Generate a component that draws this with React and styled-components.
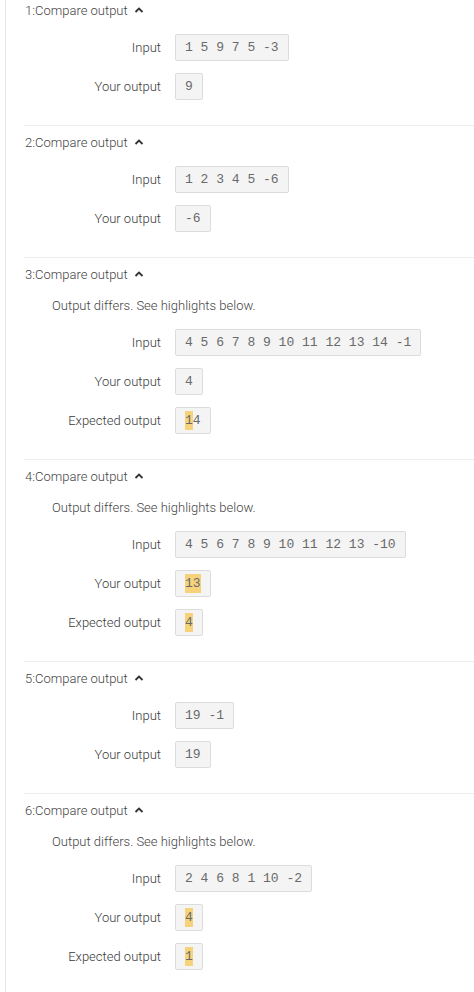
import React from "react";
import styled, { createGlobalStyle } from "styled-components";

const GlobalStyle = createGlobalStyle`
  body {
    margin: 0;
    background: #ffffff;
    font-family: Roboto, "Liberation Sans", Arial, sans-serif;
  }
`;

const Panel = styled.div`
  margin-left: 5px;
  border-left: 1px solid #e6e6e6;
  min-height: 992px;
  box-sizing: border-box;
`;

const Section = styled.section`
  margin-left: 18px;
  padding: 6px 0 25px 0;
  border-bottom: 1px solid #ececec;

  &:first-child {
    padding-top: 0;
  }
`;

const Header = styled.div`
  display: flex;
  align-items: center;
  height: 20px;
  font-size: 13px;
  font-weight: 300;
  color: #444;
  margin-left: 1px;
`;

const Chevron = styled.svg`
  width: 10px;
  height: 10px;
  margin-left: 6px;
`;

const Note = styled.div`
  margin: 12px 0 0 28px;
  height: 20px;
  line-height: 20px;
  font-size: 13px;
  font-weight: 300;
  color: #444;
`;

const Rows = styled.div`
  display: flex;
  flex-direction: column;
  gap: 12px;
  margin-top: ${(p) => (p.$afterNote ? 13 : 14)}px;
`;

const Row = styled.div`
  display: flex;
  align-items: center;
`;

const Label = styled.div`
  width: 137px;
  text-align: right;
  margin-right: 14px;
  font-size: 13px;
  font-weight: 300;
  color: #3a3a3a;
`;

const Box = styled.div`
  box-sizing: border-box;
  height: 27px;
  padding: 0 9px;
  display: flex;
  align-items: center;
  background: #f4f4f4;
  border: 1px solid #dcdcdc;
  border-radius: 2px;
  font-family: "Liberation Mono", "Courier New", monospace;
  font-size: 13px;
  color: #6a6a6a;
  white-space: pre;
`;

const Mark = styled.span`
  display: inline-block;
  line-height: 19px;
  background: #f6d27a;
`;

const sections = [
  {
    rows: [
      { label: "Input", value: "1 5 9 7 5 -3" },
      { label: "Your output", value: "9" },
    ],
  },
  {
    rows: [
      { label: "Input", value: "1 2 3 4 5 -6" },
      { label: "Your output", value: "-6" },
    ],
  },
  {
    differs: true,
    rows: [
      { label: "Input", value: "4 5 6 7 8 9 10 11 12 13 14 -1" },
      { label: "Your output", value: "4" },
      { label: "Expected output", value: "14", mark: 1 },
    ],
  },
  {
    differs: true,
    rows: [
      { label: "Input", value: "4 5 6 7 8 9 10 11 12 13 -10" },
      { label: "Your output", value: "13", mark: 2 },
      { label: "Expected output", value: "4", mark: 1 },
    ],
  },
  {
    rows: [
      { label: "Input", value: "19 -1" },
      { label: "Your output", value: "19" },
    ],
  },
  {
    differs: true,
    rows: [
      { label: "Input", value: "2 4 6 8 1 10 -2" },
      { label: "Your output", value: "4", mark: 1 },
      { label: "Expected output", value: "1", mark: 1 },
    ],
  },
];

function Value({ value, mark }) {
  if (!mark) return <Box>{value}</Box>;
  return (
    <Box>
      <Mark>{value.slice(0, mark)}</Mark>
      {value.slice(mark)}
    </Box>
  );
}

export default function App() {
  return (
    <>
      <GlobalStyle />
      <Panel>
        {sections.map((s, i) => (
          <Section key={i}>
            <Header>
              {i + 1}:Compare output
              <Chevron viewBox="0 0 10 10">
                <path
                  d="M1.5 7 L5 3.5 L8.5 7"
                  fill="none"
                  stroke="#333"
                  strokeWidth="1.8"
                />
              </Chevron>
            </Header>
            {s.differs && <Note>Output differs. See highlights below.</Note>}
            <Rows $afterNote={s.differs}>
              {s.rows.map((r) => (
                <Row key={r.label}>
                  <Label>{r.label}</Label>
                  <Value value={r.value} mark={r.mark} />
                </Row>
              ))}
            </Rows>
          </Section>
        ))}
      </Panel>
    </>
  );
}
